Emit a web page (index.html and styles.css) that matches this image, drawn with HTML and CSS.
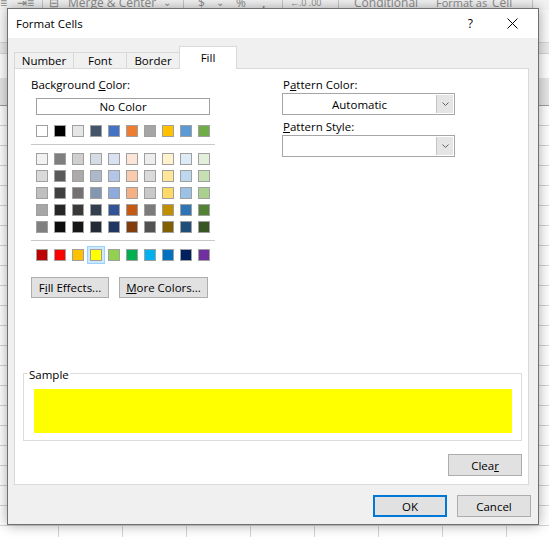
FILE: index.html
```html
<!DOCTYPE html>
<html>
<head>
<meta charset="utf-8">
<title>Format Cells</title>
<link rel="stylesheet" href="styles.css">
</head>
<body>
<div class="desktop">
  <div class="ribbon">
    <div class="ribbon-items">
      <span>≡</span>
      <span>⇥≡</span>
      <span class="rsep"></span>
      <span>⊟</span>
      <span>Merge &amp; Center</span>
      <span class="rchev">⌄</span>
      <span class="rsep"></span>
      <span>$</span>
      <span class="rchev">⌄</span>
      <span>%</span>
      <span class="rbold">,</span>
      <span class="rsep"></span>
      <span class="rsmall">←.0 .00</span>
      <span class="rsep"></span>
      <span>Conditional</span>
      <span class="rnarrow">Format as</span>
      <span>Cell</span>
      <span class="rsep"></span>
    </div>
  </div>
  <div class="formula"></div>
  <div class="band"></div>
  <div class="gap"></div>
  <div class="colhead"></div>
  <div class="cells"></div>
</div>

<div class="dialog">
  <div class="titlebar">
    <span class="title">Format Cells</span>
    <span class="help">?</span>
    <svg class="close" width="11" height="11" viewBox="0 0 11 11"><path d="M0.5 0.5 L10.5 10.5 M10.5 0.5 L0.5 10.5" stroke="#000" stroke-width="1" fill="none"/></svg>
  </div>
  <div class="tabs">
    <div class="tab t-number">Number</div>
    <div class="tab t-font">Font</div>
    <div class="tab t-border">Border</div>
    <div class="tab t-fill active">Fill</div>
  </div>
  <div class="panel">
    <div class="top">
      <div class="left">
        <div class="label">Background <u>C</u>olor:</div>
        <div class="nocolor">No Color</div>
        <div class="row row0">
          <span class="sw" style="background:#FFFFFF"></span>
          <span class="sw" style="background:#000000"></span>
          <span class="sw" style="background:#E7E6E6"></span>
          <span class="sw" style="background:#44546A"></span>
          <span class="sw" style="background:#4472C4"></span>
          <span class="sw" style="background:#ED7D31"></span>
          <span class="sw" style="background:#A5A5A5"></span>
          <span class="sw" style="background:#FFC000"></span>
          <span class="sw" style="background:#5B9BD5"></span>
          <span class="sw" style="background:#70AD47"></span>
        </div>
        <div class="sep"></div>
        <div class="tints">
          <span class="sw" style="background:#F2F2F2"></span>
          <span class="sw" style="background:#7F7F7F"></span>
          <span class="sw" style="background:#D0CECE"></span>
          <span class="sw" style="background:#D6DCE4"></span>
          <span class="sw" style="background:#D9E1F2"></span>
          <span class="sw" style="background:#FCE4D6"></span>
          <span class="sw" style="background:#EDEDED"></span>
          <span class="sw" style="background:#FFF2CC"></span>
          <span class="sw" style="background:#DDEBF7"></span>
          <span class="sw" style="background:#E2EFDA"></span>

          <span class="sw" style="background:#D9D9D9"></span>
          <span class="sw" style="background:#595959"></span>
          <span class="sw" style="background:#AEAAAA"></span>
          <span class="sw" style="background:#ACB9CA"></span>
          <span class="sw" style="background:#B4C6E7"></span>
          <span class="sw" style="background:#F8CBAD"></span>
          <span class="sw" style="background:#DBDBDB"></span>
          <span class="sw" style="background:#FFE699"></span>
          <span class="sw" style="background:#BDD7EE"></span>
          <span class="sw" style="background:#C6E0B4"></span>

          <span class="sw" style="background:#BFBFBF"></span>
          <span class="sw" style="background:#404040"></span>
          <span class="sw" style="background:#757171"></span>
          <span class="sw" style="background:#8497B0"></span>
          <span class="sw" style="background:#8EA9DB"></span>
          <span class="sw" style="background:#F4B084"></span>
          <span class="sw" style="background:#C9C9C9"></span>
          <span class="sw" style="background:#FFD966"></span>
          <span class="sw" style="background:#9BC2E6"></span>
          <span class="sw" style="background:#A9D08E"></span>

          <span class="sw" style="background:#A6A6A6"></span>
          <span class="sw" style="background:#262626"></span>
          <span class="sw" style="background:#3A3838"></span>
          <span class="sw" style="background:#333F4F"></span>
          <span class="sw" style="background:#305496"></span>
          <span class="sw" style="background:#C65911"></span>
          <span class="sw" style="background:#7B7B7B"></span>
          <span class="sw" style="background:#BF8F00"></span>
          <span class="sw" style="background:#2F75B5"></span>
          <span class="sw" style="background:#548235"></span>

          <span class="sw" style="background:#808080"></span>
          <span class="sw" style="background:#0D0D0D"></span>
          <span class="sw" style="background:#161616"></span>
          <span class="sw" style="background:#222B35"></span>
          <span class="sw" style="background:#203764"></span>
          <span class="sw" style="background:#833C0C"></span>
          <span class="sw" style="background:#525252"></span>
          <span class="sw" style="background:#806000"></span>
          <span class="sw" style="background:#1F4E78"></span>
          <span class="sw" style="background:#375623"></span>
        </div>
        <div class="sep"></div>
        <div class="row std">
          <span class="sw" style="background:#C00000"></span>
          <span class="sw" style="background:#FF0000"></span>
          <span class="sw" style="background:#FFC000"></span>
          <span class="sw sel" style="background:#FFFF00"></span>
          <span class="sw" style="background:#92D050"></span>
          <span class="sw" style="background:#00B050"></span>
          <span class="sw" style="background:#00B0F0"></span>
          <span class="sw" style="background:#0070C0"></span>
          <span class="sw" style="background:#002060"></span>
          <span class="sw" style="background:#7030A0"></span>
        </div>
        <div class="btnrow">
          <button class="btn fill-eff">F<u>i</u>ll Effects...</button>
          <button class="btn more"><u>M</u>ore Colors...</button>
        </div>
      </div>
      <div class="right">
        <div class="label plabel">P<u>a</u>ttern Color:</div>
        <div class="combo">
          <span class="combo-val">Automatic</span>
          <span class="combo-arrow"><svg width="7" height="4" viewBox="0 0 7 4"><path d="M0.5 0.5 L3.5 3.5 L6.5 0.5" stroke="#606060" stroke-width="1" fill="none"/></svg></span>
        </div>
        <div class="label plabel label2"><u>P</u>attern Style:</div>
        <div class="combo">
          <span class="combo-val"></span>
          <span class="combo-arrow"><svg width="7" height="4" viewBox="0 0 7 4"><path d="M0.5 0.5 L3.5 3.5 L6.5 0.5" stroke="#606060" stroke-width="1" fill="none"/></svg></span>
        </div>
      </div>
    </div>
    <div class="sample">
      <span class="sample-label">Sample</span>
      <div class="sample-fill"></div>
    </div>
    <div class="clear-row">
      <button class="btn clear">Clea<u>r</u></button>
    </div>
  </div>
  <div class="footer">
    <button class="btn ok">OK</button>
    <button class="btn cancel">Cancel</button>
  </div>
</div>
</body>
</html>
```
FILE: styles.css
```css
html, body {
  margin: 0;
  padding: 0;
}
body {
  width: 549px;
  height: 537px;
  overflow: hidden;
  position: relative;
  font-family: "Segoe UI", "Open Sans", "Noto Sans", sans-serif;
}

/* ---------- backdrop (Excel) ---------- */
.desktop {
  height: 537px;
  display: flex;
  flex-direction: column;
  background: #fff;
  overflow: hidden;
}
.ribbon {
  height: 10px;
  flex: none;
  background: #f3f3f3;
  overflow: hidden;
}
.ribbon-items {
  display: grid;
  grid-template-columns: 17px 25px 7px 19px 95px 20px 15px 18px 20px 26px 20px 8px 48px 16px 82px 56px 40px 17px;
  margin-top: -4px;
  height: 16px;
  font-size: 12px;
  line-height: 13px;
  color: #8c8c8c;
  white-space: nowrap;
}
.ribbon-items span { overflow: hidden; }
.rsep { border-left: 1px solid #c8c8c8; height: 16px; }
.rchev { font-size: 10px; }
.rbold { font-weight: bold; }
.rsmall { font-size: 9px; }
.rnarrow { font-size: 11px; }
.formula {
  height: 33px;
  flex: none;
  box-sizing: border-box;
  background: #fafafa;
  border-bottom: 1px solid #d6d6d6;
}
.band {
  height: 10px;
  flex: none;
  background: #ebebeb;
  border-bottom: 1px solid #d6d6d6;
}
.gap {
  height: 24px;
  flex: none;
  background: #fff;
}
.colhead {
  height: 28px;
  flex: none;
  box-sizing: border-box;
  background: #e6e6e6;
  border-bottom: 1px solid #9e9e9e;
}
.cells {
  flex: 1;
  background-color: #fff;
  background-image:
    linear-gradient(to right, #d4d4d4 1px, transparent 1px),
    linear-gradient(to bottom, #d4d4d4 1px, transparent 1px);
  background-size: 64px 100%, 100% 20px;
  background-position: 58px 0, 0 19px;
}

/* ---------- dialog window ---------- */
.dialog {
  position: absolute;
  left: 7px;
  top: 8px;
  width: 532px;
  height: 517px;
  box-sizing: border-box;
  border: 1px solid #707070;
  background: #f0f0f0;
  box-shadow: 0 0 12px rgba(0, 0, 0, 0.35);
  display: flex;
  flex-direction: column;
  font-size: 11.5px;
  color: #000;
}
.titlebar {
  height: 29px;
  flex: none;
  background: #fff;
  display: flex;
  align-items: center;
  padding-left: 8px;
}
.title { flex: 1; }
.help { margin-right: 34px; font-size: 12px; }
.close { margin-right: 20px; display: block; }

/* tabs */
.tabs {
  height: 31px;
  flex: none;
  margin-bottom: -1px;
  display: flex;
  align-items: flex-end;
  padding-left: 6px;
}
.tab {
  height: 17px;
  box-sizing: border-box;
  border: 1px solid #d9d9d9;
  border-bottom: none;
  background: #f0f0f0;
  display: flex;
  align-items: center;
  justify-content: center;
  line-height: 15px;
  padding-bottom: 1px;
}
.tab + .tab { margin-left: -1px; }
.t-number { width: 60px; }
.t-font { width: 54px; }
.t-border { width: 54px; }
.t-fill { width: 58px; }
.tab.active {
  height: 23px;
  background: #fff;
  position: relative;
  z-index: 1;
  padding-bottom: 1px;
}

/* panel */
.panel {
  margin-left: 6px;
  width: 515px;
  height: 417px;
  flex: none;
  box-sizing: border-box;
  border: 1px solid #d9d9d9;
  background: #fff;
  display: flex;
  flex-direction: column;
  padding-bottom: 8px;
}
.top {
  display: flex;
  padding-left: 16px;
}
.left {
  width: 251px;
  flex: none;
  display: flex;
  flex-direction: column;
  align-items: flex-start;
}
.label {
  margin-top: 8px;
  height: 15px;
  line-height: 15px;
  white-space: nowrap;
}
.nocolor {
  margin: 6px 0 0 5px;
  width: 174px;
  height: 17px;
  box-sizing: border-box;
  border: 1px solid #a0a0a0;
  background: #fff;
  text-align: center;
  line-height: 15px;
}
.row {
  display: flex;
  gap: 6px;
  margin-left: 5px;
}
.row0 { margin-top: 10px; }
.std { margin-top: 8px; }
.sep {
  width: 184px;
  height: 1px;
  background: #c8c8c8;
  margin-top: 7px;
}
.tints {
  display: grid;
  grid-template-columns: repeat(10, 12px);
  column-gap: 6px;
  row-gap: 5px;
  margin: 8px 0 0 5px;
}
.sw {
  display: block;
  width: 12px;
  height: 12px;
  box-sizing: border-box;
  border: 1px solid #a0a0a0;
}
.sw.sel {
  box-shadow: 0 0 0 2px #cce8ff, 0 0 0 3px #99d1ff;
}
.btnrow {
  display: flex;
  gap: 10px;
  margin-top: 16px;
}
.btn {
  height: 21px;
  box-sizing: border-box;
  border: 1px solid #adadad;
  background: #e1e1e1;
  font: inherit;
  color: #000;
  padding: 0;
  margin: 0;
  display: flex;
  align-items: center;
  justify-content: center;
  white-space: nowrap;
}
.fill-eff { width: 78px; }
.more { width: 89px; }

.right {
  display: flex;
  flex-direction: column;
  align-items: flex-start;
}
.plabel { padding-left: 1px; }
.label2 { margin-top: 4px; }
.combo {
  margin-top: 1px;
  width: 173px;
  height: 22px;
  box-sizing: border-box;
  border: 1px solid #a6a6a6;
  background: #fff;
  display: flex;
}
.combo-val {
  flex: 1;
  text-align: center;
  line-height: 21px;
}
.combo-arrow {
  width: 16px;
  margin: 1px 1px 1px 0;
  background: #e5e5e5;
  border-left: 1px solid #c4c4c4;
  display: flex;
  align-items: center;
  justify-content: center;
}
.combo-arrow svg { display: block; }

/* sample group */
.sample {
  margin: auto 6px 0 8px;
  height: 68px;
  box-sizing: border-box;
  border: 1px solid #dcdcdc;
  padding: 15px 9px 7px 10px;
  position: relative;
}
.sample-label {
  position: absolute;
  top: -7px;
  left: 4px;
  padding: 0 1px;
  background: #fff;
  line-height: 15px;
}
.sample-fill {
  height: 44px;
  background: #ffff00;
}
.clear-row {
  display: flex;
  justify-content: flex-end;
  margin: 13px 6px 0 0;
}
.clear { width: 74px; height: 22px; }

/* footer */
.footer {
  display: flex;
  justify-content: flex-end;
  gap: 10px;
  margin-top: 10px;
  padding-right: 7px;
}
.footer .btn { width: 74px; height: 22px; }
.ok { border: 2px solid #0078d7; }
```
